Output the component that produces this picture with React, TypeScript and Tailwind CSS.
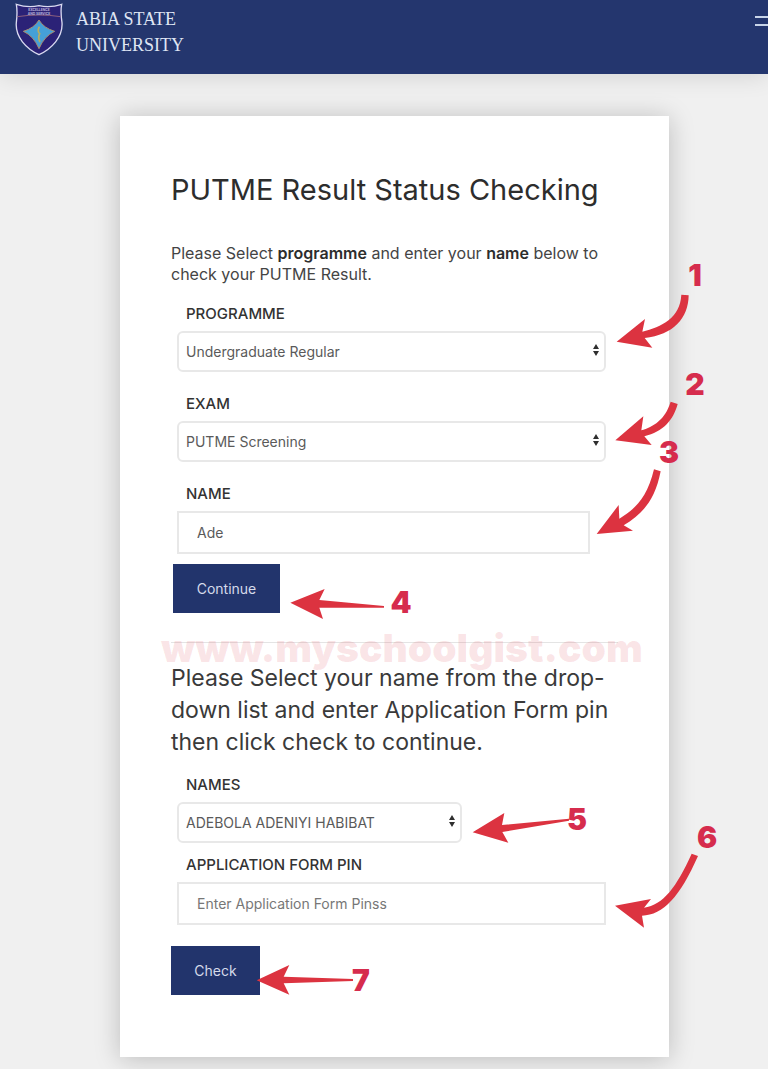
import { useState } from 'react';
import type { ReactNode } from 'react';

interface Note {
  num: number;
  width: number;
  height: number;
  path: string;
  arrowPos: string;
  numPos: string;
}

const NOTES: Record<string, Note> = {
  programme: {
    num: 1,
    width: 75,
    height: 55,
    path: 'M5 146 90 78 82 116C140 101 195 76 199 5L221 7C220 76 175 126 89 135L112 164Z',
    arrowPos: 'ml-[9px] -top-[38px]',
    numPos: 'ml-[77px] -top-[68px]',
  },
  exam: {
    num: 2,
    width: 64,
    height: 45,
    path: 'M1 118 85 46 79 88C115 77 150 57 167 2L188 9C175 57 145 92 88 106L110 132Z',
    arrowPos: 'ml-[9px] -top-[20px]',
    numPos: 'ml-[77px] -top-[49px]',
  },
  name: {
    num: 3,
    width: 66,
    height: 66,
    path: 'M2 195 68 108 70 149C112 123 152 93 174 1L194 7C177 93 142 133 83 169L111 185Z',
    arrowPos: 'ml-[6px] -top-[42px]',
    numPos: 'ml-[67px] -top-[71px]',
  },
  next: {
    num: 4,
    width: 95,
    height: 32,
    path: 'M1 44 104 3 88 36 282 54V59L88 59 99 93Z',
    arrowPos: 'ml-[10px] top-[24px]',
    numPos: 'ml-[109px] top-[26px]',
  },
  names: {
    num: 5,
    width: 98,
    height: 32,
    path: 'M2 61 97 3 90 39 291 20V26L91 60 109 92Z',
    arrowPos: 'ml-[10px] top-[10px]',
    numPos: 'ml-[103px] top-[5px]',
  },
  pin: {
    num: 6,
    width: 84,
    height: 75,
    path: 'M0 158 108 138 87 164C145 156 185 101 230 2L249 9C195 131 145 186 81 188L87 224Z',
    arrowPos: 'ml-[9px] -top-[29px]',
    numPos: 'ml-[89px] -top-[57px]',
  },
  check: {
    num: 7,
    width: 98,
    height: 30,
    path: 'M2 46 100 0 83 35 291 42V48L83 55 100 89Z',
    arrowPos: '-ml-[4px] top-[19px]',
    numPos: 'ml-[89px] top-[22px]',
  },
};

function Callout({ note }: { note: Note }) {
  return (
    <>
      <svg
        className={`pointer-events-none absolute left-full z-10 max-w-none fill-[#dc3340] ${note.arrowPos}`}
        width={note.width}
        height={note.height}
        viewBox={`0 0 ${note.width * 3} ${note.height * 3}`}
        aria-hidden="true"
      >
        <path d={note.path} />
      </svg>
      <span
        className={`pointer-events-none absolute left-full z-10 w-6 text-center text-[30px] leading-6 font-black text-[#d62c4d] ${note.numPos}`}
      >
        {note.num}
      </span>
    </>
  );
}

function Crest() {
  return (
    <svg width="48" height="54" viewBox="0 0 144 162" aria-hidden="true">
      <path
        d="M4 7Q38 18 72 11Q106 18 140 7Q136 28 141 62C144 105 110 140 72 158C34 140 0 105 4 62Q8 28 4 7Z"
        fill="#2b2277"
        stroke="#d9daf0"
        strokeWidth="4"
      />
      <path d="M7 44Q72 34 137 44" fill="none" stroke="#8b5f7e" strokeWidth="3" />
      <path d="M72 54Q86 78 119 88Q88 102 72 140Q56 102 25 88Q58 78 72 54Z" fill="#45a0d8" stroke="#a98a70" strokeWidth="3" />
      <path d="M73 74Q66 88 74 95Q68 108 75 120" fill="none" stroke="#b9ad61" strokeWidth="5" />
      <text x="72" y="28" textAnchor="middle" fontSize="10" fontWeight="700" fill="#b9b3da">EXCELLENCE</text>
      <text x="72" y="38" textAnchor="middle" fontSize="10" fontWeight="700" fill="#b9b3da">AND SERVICE</text>
    </svg>
  );
}

function Field({ id, label, children }: { id: string; label: string; children: ReactNode }) {
  return (
    <div className="pl-[6px]">
      <label htmlFor={id} className="mb-[7px] block pl-[9px] text-[15px] leading-5 font-medium text-[#333]">
        {label}
      </label>
      {children}
    </div>
  );
}

function Select({ id, options }: { id: string; options: string[] }) {
  return (
    <>
      <select
        id={id}
        className="block h-[41px] w-full appearance-none rounded-md border-2 border-[#e8e8e8] bg-white px-[7px] text-[14px] text-[#5a5a5a]"
      >
        {options.map((o) => (
          <option key={o}>{o}</option>
        ))}
      </select>
      <svg
        className="pointer-events-none absolute top-[13px] right-[6px] fill-[#2f2f2f]"
        width="8"
        height="12"
        viewBox="0 0 8 12"
        aria-hidden="true"
      >
        <path d="M4 0 7 5H1ZM4 12 1 7H7Z" />
      </svg>
    </>
  );
}

const INPUT =
  'block h-[43px] w-full border-2 border-[#e8e8e8] bg-white px-[18px] text-[14px] text-[#5a5a5a] placeholder:text-[#777]';
const BUTTON = 'block h-[49px] bg-[#22346c] text-[14px] text-[#d5daea]';

export default function App() {
  const [name, setName] = useState('Ade');
  const [pin, setPin] = useState('');

  return (
    <div className="min-h-screen overflow-hidden bg-[#f0f0f0] font-['Inter',sans-serif]">
      <header className="flex h-[74px] items-start justify-between bg-[#24366e] pl-[15px] shadow-[0_2px_24px_rgba(0,0,0,0.12)]">
        <a href="#" className="flex gap-[13px] pt-[2px]">
          <Crest />
          <span className="pt-[4px] font-['Liberation_Serif',serif] text-[18px] leading-[26px] text-[#dfe5f4]">
            ABIA STATE
            <br />
            UNIVERSITY
          </span>
        </a>
        <button type="button" aria-label="Menu" className="-mr-[11px] flex w-6 flex-col gap-[6px] pt-[16px]">
          <span className="h-[2px] w-full bg-[#c8d4e8]" />
          <span className="h-[2px] w-full bg-[#c8d4e8]" />
        </button>
      </header>

      <main className="pt-[42px] pr-[99px] pb-3 pl-[120px]">
        <div className="bg-white px-[51px] pt-[56px] pb-[62px] shadow-[0_2px_24px_rgba(0,0,0,0.22)]">
          <h1 className="text-[29px] leading-9 text-[#2d2d2d]">PUTME Result Status Checking</h1>
          <p className="mt-[35px] text-[16px] leading-[21px] text-[#444]">
            Please Select <b className="font-semibold text-[#2d2d2d]">programme</b> and enter your{' '}
            <b className="font-semibold text-[#2d2d2d]">name</b> below to
            <br />
            check your PUTME Result.
          </p>

          <form className="mt-[19px]" onSubmit={(e) => e.preventDefault()}>
            <div className="flex flex-col gap-[22px]">
              <Field id="programme" label="PROGRAMME">
                <div className="relative mr-3">
                  <Select id="programme" options={['Undergraduate Regular']} />
                  <Callout note={NOTES.programme} />
                </div>
              </Field>
              <Field id="exam" label="EXAM">
                <div className="relative mr-3">
                  <Select id="exam" options={['PUTME Screening']} />
                  <Callout note={NOTES.exam} />
                </div>
              </Field>
              <Field id="name" label="NAME">
                <div className="relative mr-7">
                  <input id="name" className={INPUT} value={name} onChange={(e) => setName(e.target.value)} />
                  <Callout note={NOTES.name} />
                </div>
              </Field>
            </div>
            <div className="relative mt-[10px] ml-[2px] w-fit">
              <button type="submit" className={`w-[107px] ${BUTTON}`}>
                Continue
              </button>
              <Callout note={NOTES.next} />
            </div>
          </form>

          <div className="relative mt-[29px] mb-[19px]">
            <hr className="border-[#e4e4e4]" />
            <div className="pointer-events-none absolute -top-[16px] -left-[10px] text-[39px] leading-[44px] font-black whitespace-nowrap text-[#dc3340]/13">
              www.myschoolgist.com
            </div>
          </div>

          <h2 className="text-[23px] leading-8 text-[#3a3a3a]">
            Please Select your name from the drop-down list and enter Application Form pin then click check to
            continue.
          </h2>

          <form className="mt-[17px]" onSubmit={(e) => e.preventDefault()}>
            <div className="flex flex-col gap-[12px]">
              <Field id="names" label="NAMES">
                <div className="relative w-[285px]">
                  <Select id="names" options={['ADEBOLA ADENIYI HABIBAT']} />
                  <Callout note={NOTES.names} />
                </div>
              </Field>
              <Field id="pin" label="APPLICATION FORM PIN">
                <div className="relative mr-3">
                  <input
                    id="pin"
                    className={INPUT}
                    placeholder="Enter Application Form Pinss"
                    value={pin}
                    onChange={(e) => setPin(e.target.value)}
                  />
                  <Callout note={NOTES.pin} />
                </div>
              </Field>
            </div>
            <div className="relative mt-[21px] w-fit">
              <button type="submit" className={`w-[89px] ${BUTTON}`}>
                Check
              </button>
              <Callout note={NOTES.check} />
            </div>
          </form>
        </div>
      </main>
    </div>
  );
}
